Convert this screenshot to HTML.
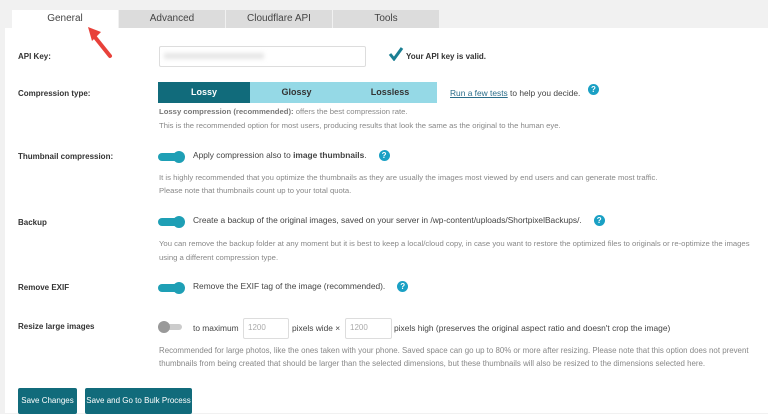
<!DOCTYPE html>
<html><head><style>
body{margin:0;width:768px;height:413px;overflow:hidden;background:#f1f1f1;font-family:"Liberation Sans",sans-serif;position:relative;color:#333}
.a{position:absolute;white-space:nowrap}
.panel{position:absolute;left:5px;top:28px;width:763px;height:385px;background:#fff}
.tab{position:absolute;top:10px;height:18px;width:106px;background:#dcdcdc;font-size:10px;text-align:center;line-height:18px;color:#444}
.lbl{font-size:8px;font-weight:bold;color:#333}
.txt{font-size:8.4px;color:#444}
.d{font-size:7.7px;color:#888}
.tg{position:absolute;width:26px;height:8px;background:#1e9fb5;border-radius:4px}
.tg::after{content:"";position:absolute;right:-1px;top:-2px;width:12px;height:12px;border-radius:6px;background:#1e9fb5}
.q{display:inline-block;vertical-align:middle;width:11px;height:11px;border-radius:6px;background:#1aa0c4;color:#fff;font-size:8px;font-weight:bold;text-align:center;line-height:11px;margin-left:12px}
.btn{position:absolute;top:388px;height:26px;background:#116b7b;color:#fff;font-size:8px;line-height:26px;text-align:center;border-radius:2px}
.inp{position:absolute;border:1px solid #ddd;border-radius:2px;font-size:8px;color:#aaa;line-height:18px;padding-left:4px}
</style></head><body>
<div class="panel"></div>
<div class="tab" style="left:12px;background:#fff;height:19px">General</div>
<div class="tab" style="left:119px">Advanced</div>
<div class="tab" style="left:226px">Cloudflare API</div>
<div class="tab" style="left:333px">Tools</div>
<svg class="a" style="left:84px;top:24px" width="30" height="36"><path d="M26 32 L10 12" stroke="#e8413a" stroke-width="4" stroke-linecap="round"/><path d="M4 3 L17 8 L8 17 Z" fill="#e8413a"/></svg>

<div class="a lbl" style="left:18px;top:52px">API Key:</div>
<div class="inp" style="left:159px;top:46px;width:201px;height:19px"><span style="display:inline-block;width:100px;height:6px;background:#e6e6e6;margin-top:6px;filter:blur(2px)"></span></div>
<svg class="a" style="left:388px;top:47px" width="16" height="14"><path d="M2 7 L6 12 L14 1" stroke="#1a7f93" stroke-width="3" fill="none"/></svg>
<div class="a lbl" style="left:406px;top:52px">Your API key is valid.</div>

<div class="a lbl" style="left:18px;top:89px">Compression type:</div>
<div class="a" style="left:158px;top:82px;width:92px;height:21px;background:#116b7b;color:#fff;font-size:9px;font-weight:bold;text-align:center;line-height:21px">Lossy</div>
<div class="a" style="left:250px;top:82px;width:187px;height:21px;background:#95d9e6"></div>
<div class="a" style="left:250px;top:82px;width:93px;height:21px;color:#333;font-size:9px;font-weight:bold;text-align:center;line-height:21px">Glossy</div>
<div class="a" style="left:343px;top:82px;width:94px;height:21px;color:#333;font-size:9px;font-weight:bold;text-align:center;line-height:21px">Lossless</div>
<div class="a txt" style="left:450px;top:88px"><span style="text-decoration:underline;color:#2a6d8a">Run a few tests</span> to help you decide.</div>
<div class="a q" style="left:576px;top:84px">?</div>
<div class="a d" style="left:159px;top:107px"><b style="color:#777">Lossy compression (recommended):</b> offers the best compression rate.</div>
<div class="a d" style="left:159px;top:121px">This is the recommended option for most users, producing results that look the same as the original to the human eye.</div>

<div class="a lbl" style="left:18px;top:152px">Thumbnail compression:</div>
<div class="tg" style="left:158px;top:153px"></div>
<div class="a txt" style="left:193px;top:150px">Apply compression also to <b>image thumbnails</b>.<span class="q">?</span></div>
<div class="a d" style="left:159px;top:173px">It is highly recommended that you optimize the thumbnails as they are usually the images most viewed by end users and can generate most traffic.</div>
<div class="a d" style="left:159px;top:186px">Please note that thumbnails count up to your total quota.</div>

<div class="a lbl" style="left:18px;top:218px">Backup</div>
<div class="tg" style="left:158px;top:218px"></div>
<div class="a txt" style="left:193px;top:215px">Create a backup of the original images, saved on your server in /wp-content/uploads/ShortpixelBackups/.<span class="q">?</span></div>
<div class="a d" style="left:159px;top:239px">You can remove the backup folder at any moment but it is best to keep a local/cloud copy, in case you want to restore the optimized files to originals or re-optimize the images</div>
<div class="a d" style="left:159px;top:253px">using a different compression type.</div>

<div class="a lbl" style="left:18px;top:283px">Remove EXIF</div>
<div class="tg" style="left:158px;top:284px"></div>
<div class="a txt" style="left:193px;top:281px">Remove the EXIF tag of the image (recommended).<span class="q">?</span></div>

<div class="a lbl" style="left:18px;top:322px">Resize large images</div>
<div class="a" style="left:158px;top:324px;width:24px;height:6px;border-radius:3px;background:#ccc"></div>
<div class="a" style="left:158px;top:321px;width:12px;height:12px;border-radius:6px;background:#999"></div>
<div class="a txt" style="left:193px;top:323px">to maximum</div>
<div class="inp" style="left:243px;top:318px;width:40px;height:19px">1200</div>
<div class="a txt" style="left:292px;top:323px">pixels wide ×</div>
<div class="inp" style="left:345px;top:318px;width:41px;height:19px">1200</div>
<div class="a txt" style="left:394px;top:323px">pixels high (preserves the original aspect ratio and doesn't crop the image)</div>
<div class="a d" style="left:159px;top:346px;font-size:7.9px">Recommended for large photos, like the ones taken with your phone. Saved space can go up to 80% or more after resizing. Please note that this option does not prevent</div>
<div class="a d" style="left:159px;top:359px;font-size:7.9px">thumbnails from being created that should be larger than the selected dimensions, but these thumbnails will also be resized to the dimensions selected here.</div>

<div class="btn" style="left:18px;width:59px">Save Changes</div>
<div class="btn" style="left:85px;width:107px">Save and Go to Bulk Process</div>
</body></html>
